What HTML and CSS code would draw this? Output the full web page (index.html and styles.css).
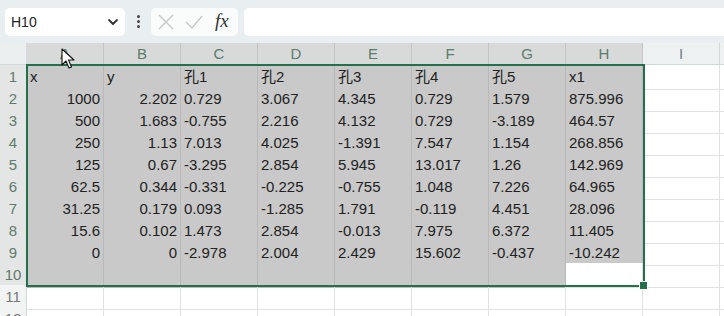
FILE: index.html
```html
<!DOCTYPE html>
<html lang="en">
<head>
<meta charset="UTF-8">
<title>Sheet1</title>
<link rel="stylesheet" href="styles.css">
</head>
<body>
    <div class="toolbar">
        <div class="namebox">
            <span>H10</span>
            <svg class="chev" width="12" height="8" viewBox="0 0 12 8"><path d="M2 2 L6 6 L10 2" fill="none" stroke="#333" stroke-width="1.8" stroke-linecap="round" stroke-linejoin="round"/></svg>
        </div>
        <div class="dots"><i></i><i></i><i></i></div>
        <div class="fxbox">
            <svg width="18" height="18" viewBox="0 0 18 18"><path d="M2 2 L16 16 M16 2 L2 16" stroke="#c4c8c9" stroke-width="1.4"/></svg>
            <svg width="20" height="18" viewBox="0 0 20 18"><path d="M2 9 L8 15 L18 3" fill="none" stroke="#c4c8c9" stroke-width="1.4"/></svg>
            <span class="fx">fx</span>
        </div>
        <div class="formula"></div>
    </div>

    <div class="sheet">
        <div class="row">
            <div class="corner"></div>
            <div class="hdr on">A</div><div class="hdr on">B</div><div class="hdr on">C</div><div class="hdr on">D</div>
            <div class="hdr on">E</div><div class="hdr on">F</div><div class="hdr on">G</div><div class="hdr on">H</div>
            <div class="hdr">I</div><div class="hdr last"></div>
        </div>
        <div class="row">
            <div class="rh on">1</div>
            <div class="c s">x</div><div class="c s">y</div><div class="c s">孔1</div><div class="c s">孔2</div>
            <div class="c s">孔3</div><div class="c s">孔4</div><div class="c s">孔5</div><div class="c s">x1</div>
            <div class="c"></div><div class="c last"></div>
        </div>
        <div class="row">
            <div class="rh on">2</div>
            <div class="c s n">1000</div><div class="c s n">2.202</div><div class="c s">0.729</div><div class="c s">3.067</div>
            <div class="c s">4.345</div><div class="c s">0.729</div><div class="c s">1.579</div><div class="c s">875.996</div>
            <div class="c"></div><div class="c last"></div>
        </div>
        <div class="row">
            <div class="rh on">3</div>
            <div class="c s n">500</div><div class="c s n">1.683</div><div class="c s">-0.755</div><div class="c s">2.216</div>
            <div class="c s">4.132</div><div class="c s">0.729</div><div class="c s">-3.189</div><div class="c s">464.57</div>
            <div class="c"></div><div class="c last"></div>
        </div>
        <div class="row">
            <div class="rh on">4</div>
            <div class="c s n">250</div><div class="c s n">1.13</div><div class="c s">7.013</div><div class="c s">4.025</div>
            <div class="c s">-1.391</div><div class="c s">7.547</div><div class="c s">1.154</div><div class="c s">268.856</div>
            <div class="c"></div><div class="c last"></div>
        </div>
        <div class="row">
            <div class="rh on">5</div>
            <div class="c s n">125</div><div class="c s n">0.67</div><div class="c s">-3.295</div><div class="c s">2.854</div>
            <div class="c s">5.945</div><div class="c s">13.017</div><div class="c s">1.26</div><div class="c s">142.969</div>
            <div class="c"></div><div class="c last"></div>
        </div>
        <div class="row">
            <div class="rh on">6</div>
            <div class="c s n">62.5</div><div class="c s n">0.344</div><div class="c s">-0.331</div><div class="c s">-0.225</div>
            <div class="c s">-0.755</div><div class="c s">1.048</div><div class="c s">7.226</div><div class="c s">64.965</div>
            <div class="c"></div><div class="c last"></div>
        </div>
        <div class="row">
            <div class="rh on">7</div>
            <div class="c s n">31.25</div><div class="c s n">0.179</div><div class="c s">0.093</div><div class="c s">-1.285</div>
            <div class="c s">1.791</div><div class="c s">-0.119</div><div class="c s">4.451</div><div class="c s">28.096</div>
            <div class="c"></div><div class="c last"></div>
        </div>
        <div class="row">
            <div class="rh on">8</div>
            <div class="c s n">15.6</div><div class="c s n">0.102</div><div class="c s">1.473</div><div class="c s">2.854</div>
            <div class="c s">-0.013</div><div class="c s">7.975</div><div class="c s">6.372</div><div class="c s">11.405</div>
            <div class="c"></div><div class="c last"></div>
        </div>
        <div class="row">
            <div class="rh on">9</div>
            <div class="c s n">0</div><div class="c s n">0</div><div class="c s">-2.978</div><div class="c s">2.004</div>
            <div class="c s">2.429</div><div class="c s">15.602</div><div class="c s">-0.437</div><div class="c s">-10.242</div>
            <div class="c"></div><div class="c last"></div>
        </div>
        <div class="row">
            <div class="rh on">10</div>
            <div class="c s"></div><div class="c s"></div><div class="c s"></div><div class="c s"></div>
            <div class="c s"></div><div class="c s"></div><div class="c s"></div><div class="c active"></div>
            <div class="c"></div><div class="c last"></div>
        </div>
        <div class="row">
            <div class="rh">11</div>
            <div class="c"></div><div class="c"></div><div class="c"></div><div class="c"></div>
            <div class="c"></div><div class="c"></div><div class="c"></div><div class="c"></div>
            <div class="c"></div><div class="c last"></div>
        </div>
        <div class="row">
            <div class="rh">12</div>
            <div class="c"></div><div class="c"></div><div class="c"></div><div class="c"></div>
            <div class="c"></div><div class="c"></div><div class="c"></div><div class="c"></div>
            <div class="c"></div><div class="c last"></div>
        </div>

        <!-- selection frame A1:H10 -->
        <div class="selection"><div class="handle"></div></div>
    </div>

    <svg class="cursor" width="14" height="22" viewBox="0 0 14 22">
        <path d="M1 1 L1 17 L5 13 L8 20 L10.5 19 L7.5 12 L13 12 Z" fill="#fff" stroke="#111" stroke-width="1.1" stroke-linejoin="round"/>
    </svg>
</body>
</html>
```

FILE: styles.css
```css
body {
    margin: 0;
    width: 724px;
    height: 316px;
    overflow: hidden;
    font-family: "Liberation Sans", "Noto Sans CJK SC", Arial, sans-serif;
    background-color: #fff;
    position: relative;
}
.toolbar {
    height: 43px;
    background-color: #e9eef0;
    display: flex;
    align-items: center;
    padding-left: 5px;
    box-sizing: border-box;
}
.namebox {
    width: 120px;
    height: 28px;
    background-color: #fff;
    border-radius: 5px;
    display: flex;
    align-items: center;
    justify-content: space-between;
    padding: 0 6px 0 6px;
    box-sizing: border-box;
    font-size: 14px;
    color: #222;
}
.dots {
    width: 26px;
    display: flex;
    flex-direction: column;
    align-items: center;
    gap: 2px;
}
.dots i {
    width: 3px;
    height: 3px;
    border-radius: 50%;
    background-color: #444;
}
.fxbox {
    width: 87px;
    height: 28px;
    background-color: #fafbfb;
    border-radius: 5px;
    display: flex;
    align-items: center;
    gap: 9px;
    padding-left: 6px;
    box-sizing: border-box;
}
.fx {
    font-family: "Liberation Serif", serif;
    font-style: italic;
    font-size: 19px;
    color: #333;
    margin-left: 2px;
    margin-top: -2px;
}
.formula {
    flex: 1;
    height: 28px;
    margin-left: 6px;
    background-color: #fff;
    border-radius: 5px 0 0 5px;
}
.sheet {
    position: relative;
}
.row {
    display: grid;
    grid-template-columns: 27px repeat(9, 77px) 1fr;
    height: 22px;
}
.corner {
    background-color: #eceff0;
    border-right: 1px solid #d6d9da;
    border-bottom: 1px solid #d6d9da;
}
.hdr {
    background-color: #eef1f2;
    border-right: 1px solid #d4d7d8;
    border-bottom: 1px solid #d4d7d8;
    text-align: center;
    font-size: 15px;
    line-height: 21px;
    color: #6f7d86;
}
.hdr.on {
    background-color: #d8dada;
    color: #5b7d6c;
    border-right-color: #c4c6c6;
}
.hdr.last {
    border-right: none;
}
.rh {
    background-color: #f2f4f4;
    border-right: 1px solid #d4d7d8;
    border-bottom: 1px solid #e0e2e2;
    text-align: center;
    font-size: 15px;
    line-height: 24px;
    color: #777;
}
.rh.on {
    background-color: #e4e6e6;
    color: #5f7a6c;
}
.c {
    border-right: 1px solid #e1e1e1;
    border-bottom: 1px solid #e1e1e1;
    padding: 0 3px;
    font-size: 15px;
    line-height: 23px;
    color: #222;
    white-space: nowrap;
    overflow: hidden;
}
.c.s {
    background-color: #c9c9c9;
    border-color: #b8b8b8;
}
.c.n {
    text-align: right;
}
.c.active {
    background-color: #fff;
}
.c.last {
    border-right: none;
}
.selection {
    position: absolute;
    left: 26px;
    top: 21px;
    width: 619px;
    height: 223px;
    border: 2px solid #24704d;
    box-sizing: border-box;
    pointer-events: none;
}
.handle {
    position: absolute;
    right: -5px;
    bottom: -5px;
    width: 7px;
    height: 7px;
    background-color: #24704d;
    border: 1px solid #fff;
}
.cursor {
    position: absolute;
    left: 61px;
    top: 48px;
}
```
